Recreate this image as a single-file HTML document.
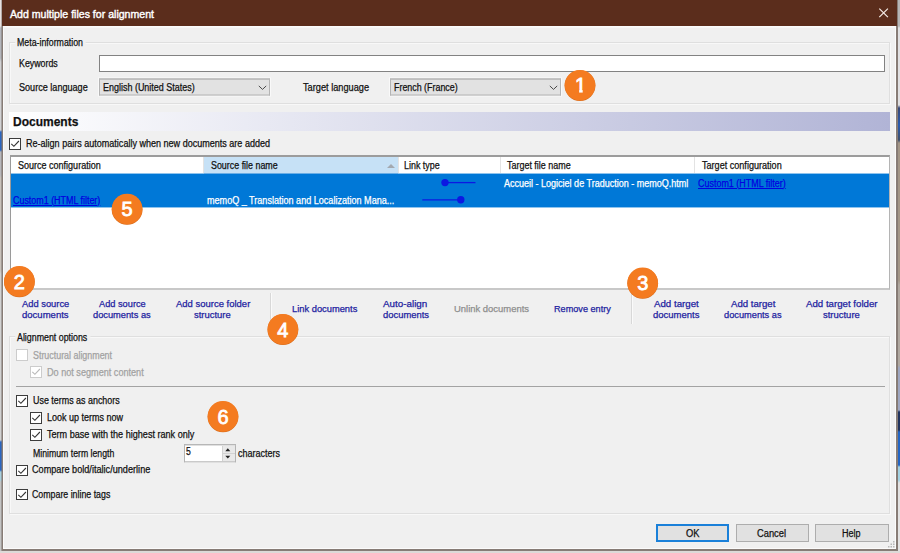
<!DOCTYPE html>
<html lang="en">
<head>
<meta charset="utf-8">
<title>Add multiple files for alignment</title>
<style>
html,body{margin:0;padding:0;}
body{width:900px;height:553px;overflow:hidden;position:relative;background:#d9d9d9;font-family:"Liberation Sans",sans-serif;font-size:10px;color:#111;}
.abs,.t,.cb,.btn,.circ,.grp,.inp,.combo{position:absolute;box-sizing:border-box;}
.t{white-space:nowrap;line-height:12px;transform-origin:0 50%;-webkit-text-stroke:0.25px;}
.grp{border:1px solid #dfdfdf;box-shadow:1px 1px 0 #f8f8f8,inset 1px 1px 0 #f8f8f8;}
.inp{background:#fff;border:1px solid #828282;}
.combo{background:#e2e2e2;border:1px solid #b4b4b4;border-top-color:#9c9c9c;box-shadow:0 0 0 1px #f9f9f9;transform:translateY(-0.5px);}
.circ{width:31px;height:31px;border-radius:50%;background:#f47b20;color:#fff;font-size:20px;text-align:center;line-height:31px;-webkit-text-stroke:0.8px #fff;box-shadow:inset 0 -1px 1px rgba(170,70,0,.45),0 0 1px rgba(200,100,30,.6);}
.cb{width:11.5px;height:11.5px;border:1px solid #3c3c3c;background:#fff;}
.cb.dis{border-color:#cccccc;}
.cb svg{position:absolute;left:-1px;top:-1px;}
.btn{height:18px;background:#e1e1e1;border:1px solid #adadad;}
</style>
</head>
<body>

<div class="abs" style="left:0;top:0;width:2px;height:553px;background:linear-gradient(to bottom,#e8e1e1 0,#e8e1e1 26px,#b4b6bc 28px,#b4b6bc 58px,#d2d2d4 62px,#d2d2d4 130px,#2a66c2 132px,#2a66c2 150px,#b8b8bc 152px,#b8b8bc 175px,#c9c2bb 178px,#c9c2bb 270px,#d2d2d2 274px,#d2d2d2 440px,#2a66c2 442px,#2a66c2 470px,#a8d0de 472px,#a8d0de 480px,#c4c4c4 482px,#c4c4c4 553px);"></div>
<div class="abs" style="left:898px;top:0;width:2px;height:553px;background:linear-gradient(to bottom,#b6b6b6 0,#b6b6b6 26px,#e0e0e2 28px,#e0e0e2 105px,#3a4a78 108px,#2a5cb0 125px,#40506c 140px,#a39687 143px,#a39687 280px,#b0a8a0 285px,#b0a8a0 365px,#9ea6c0 368px,#9ea6c0 410px,#22345e 412px,#22345e 430px,#2466c4 432px,#2466c4 465px,#a4d2e2 467px,#a4d2e2 480px,#e2e2e2 483px,#e2e2e2 553px);"></div>
<div class="abs" style="left:0;top:551px;width:900px;height:2px;background:#dddad8;"></div>
<div class="abs" style="left:1px;top:0;width:1px;height:551px;background:rgba(124,116,112,.5);"></div>
<div class="abs" style="left:2px;top:0;width:896px;height:551px;background:#877c76;"></div>
<div class="abs" style="left:3px;top:0;width:893px;height:549px;background:#fbfbfb;"></div>
<div class="abs" style="left:4px;top:0;width:891px;height:548px;background:#f0f0f0;"></div>
<div class="abs" style="left:2px;top:0;width:895px;height:26px;background:#5b2d1c;"></div>
<div class="abs" style="left:3px;top:26px;width:893px;height:2px;background:linear-gradient(to bottom,#fcfcfc,#f5f5f5);"></div>
<svg class="abs" style="left:878px;top:7px" width="11" height="11" viewBox="0 0 11 11"><path d="M1.3 1.6 L9.9 10.2 M9.9 1.6 L1.3 10.2" stroke="#f5ebe6" stroke-width="1.2" fill="none"/></svg>
<div class="grp" style="left:9px;top:42px;width:881px;height:62px;"></div>
<div class="inp" style="left:99px;top:55px;width:786px;height:17px;"></div>
<div class="combo" style="left:99px;top:79px;width:171px;height:17px;"></div>
<svg class="abs" style="left:258px;top:85px" width="9" height="6" viewBox="0 0 9 6"><path d="M0.8 0.9 L4.5 4.4 L8.2 0.9" stroke="#4a4a4a" stroke-width="1" fill="none"/></svg>
<div class="combo" style="left:390px;top:79px;width:171px;height:17px;"></div>
<svg class="abs" style="left:549px;top:85px" width="9" height="6" viewBox="0 0 9 6"><path d="M0.8 0.9 L4.5 4.4 L8.2 0.9" stroke="#4a4a4a" stroke-width="1" fill="none"/></svg>
<div class="abs" style="left:9px;top:112px;width:881px;height:19px;background:linear-gradient(to right,#ffffff 0%,#b1b4d6 100%);"></div>
<div class="abs" style="left:10px;top:155px;width:880px;height:135px;background:#fff;border:1px solid #9a9a9a;border-top:2px solid #9c9c9c;border-bottom:2px solid #c8c8c8;border-right-color:#b4b4b4;"></div>
<div class="abs" style="left:204px;top:157px;width:194px;height:17px;background:#c6e1f6;"></div>
<div class="abs" style="left:203px;top:157px;width:1px;height:17px;background:#e3e3e3;"></div>
<div class="abs" style="left:398px;top:157px;width:1px;height:17px;background:#e3e3e3;"></div>
<div class="abs" style="left:500px;top:157px;width:1px;height:17px;background:#e3e3e3;"></div>
<div class="abs" style="left:694px;top:157px;width:1px;height:17px;background:#e3e3e3;"></div>
<svg class="abs" style="left:387px;top:164px" width="8" height="4" viewBox="0 0 8 4"><path d="M0 4 L4 0 L8 4 Z" fill="#a3a9b0"/></svg>
<div class="abs" style="left:11px;top:173px;width:878px;height:35px;background:linear-gradient(to bottom,#8fc4ee 0,#8fc4ee 1px,#0078d7 1px,#0078d7 34px,#8fc4ee 34px);"></div>
<div class="abs" style="left:204px;top:173px;width:194px;height:1px;background:#6aaee6;"></div>
<svg class="abs" style="left:415px;top:176px" width="70" height="30" viewBox="0 0 70 30">
<path d="M30 6.6 H60.5" stroke="#0c18e2" stroke-width="1.3"/><circle cx="30" cy="6.6" r="3.7" fill="#0c18e2"/>
<path d="M7.3 23.8 H46" stroke="#0c18e2" stroke-width="1.3"/><circle cx="45.8" cy="23.8" r="3.7" fill="#0c18e2"/>
</svg>
<div class="abs" style="left:270px;top:293px;width:2px;height:31px;background:linear-gradient(to right,#d8d8d8 50%,#fafafa 50%);"></div>
<div class="abs" style="left:631px;top:293px;width:2px;height:31px;background:linear-gradient(to right,#d8d8d8 50%,#fafafa 50%);"></div>
<div class="grp" style="left:9px;top:336px;width:881px;height:178px;"></div>
<div class="abs" style="left:16px;top:386px;width:869px;height:1px;background:#a3a3a3;"></div>
<div class="cb" style="left:9.2px;top:138.2px;"><svg width="12" height="12" viewBox="0 0 12 12"><path d="M2.3 5.8 L4.9 8.3 L9.9 3.0" stroke="#333" stroke-width="1.1" fill="none"/></svg></div>
<div class="cb dis" style="left:16.3px;top:349.3px;"></div>
<div class="cb dis" style="left:30px;top:366.3px;"><svg width="12" height="12" viewBox="0 0 12 12"><path d="M2.3 5.8 L4.9 8.3 L9.9 3.0" stroke="#b9b9b9" stroke-width="1.1" fill="none"/></svg></div>
<div class="cb" style="left:16.1px;top:395.2px;"><svg width="12" height="12" viewBox="0 0 12 12"><path d="M2.3 5.8 L4.9 8.3 L9.9 3.0" stroke="#333" stroke-width="1.1" fill="none"/></svg></div>
<div class="cb" style="left:30px;top:412.4px;"><svg width="12" height="12" viewBox="0 0 12 12"><path d="M2.3 5.8 L4.9 8.3 L9.9 3.0" stroke="#333" stroke-width="1.1" fill="none"/></svg></div>
<div class="cb" style="left:30px;top:429.3px;"><svg width="12" height="12" viewBox="0 0 12 12"><path d="M2.3 5.8 L4.9 8.3 L9.9 3.0" stroke="#333" stroke-width="1.1" fill="none"/></svg></div>
<div class="cb" style="left:16.1px;top:464.6px;"><svg width="12" height="12" viewBox="0 0 12 12"><path d="M2.3 5.8 L4.9 8.3 L9.9 3.0" stroke="#333" stroke-width="1.1" fill="none"/></svg></div>
<div class="cb" style="left:16.1px;top:488.9px;"><svg width="12" height="12" viewBox="0 0 12 12"><path d="M2.3 5.8 L4.9 8.3 L9.9 3.0" stroke="#333" stroke-width="1.1" fill="none"/></svg></div>
<div class="inp" style="left:184px;top:444px;width:52px;height:18px;border-color:#b4b4b4;border-top-color:#9a9a9a;transform:translateY(0.3px);"></div>
<svg class="abs" style="left:222px;top:446px" width="13" height="15" viewBox="0 0 13 15"><rect width="13" height="15" fill="#e9e9e9"/><path d="M0.5 0 V15 M1 7.5 H13" stroke="#d2d2d2"/><path d="M3.3 5.2 L5.8 2.2 L8.3 5.2 Z M3.3 9.8 L5.8 12.6 L8.3 9.8 Z" fill="#222"/></svg>
<div class="btn" style="left:656px;top:524px;width:73px;border:2px solid #1a80d9;"></div>
<div class="btn" style="left:736px;top:524px;width:73px;"></div>
<div class="btn" style="left:815px;top:524px;width:74px;"></div>
<svg class="abs" style="left:888px;top:540px" width="8" height="8" viewBox="0 0 8 8"><g fill="#b8b8b8"><rect x="5" y="1" width="1.5" height="1.5"/><rect x="5" y="3.5" width="1.5" height="1.5"/><rect x="2.5" y="3.5" width="1.5" height="1.5"/><rect x="5" y="6" width="1.5" height="1.5"/><rect x="2.5" y="6" width="1.5" height="1.5"/><rect x="0" y="6" width="1.5" height="1.5"/></g></svg>
<div class="t" style="left:9.6px;top:8.0px;transform:scaleX(0.9613);font-size:11px;color:#fff;-webkit-text-stroke:0.4px;">Add multiple files for alignment</div>
<div class="t" style="left:17.3px;top:37.0px;transform:scaleX(0.8796);background:#f0f0f0;box-shadow:-2px 0 0 #f0f0f0,3px 0 0 #f0f0f0;">Meta-information</div>
<div class="t" style="left:19.0px;top:58.3px;transform:scaleX(0.8814);">Keywords</div>
<div class="t" style="left:19.0px;top:82.3px;transform:scaleX(0.9084);">Source language</div>
<div class="t" style="left:102.7px;top:82.0px;transform:scaleX(0.8965);">English (United States)</div>
<div class="t" style="left:303.3px;top:82.3px;transform:scaleX(0.9201);">Target language</div>
<div class="t" style="left:394.0px;top:82.0px;transform:scaleX(0.8886);">French (France)</div>
<div class="t" style="left:12.7px;top:114.0px;transform:scaleX(0.9224);font-size:13px;line-height:16px;font-weight:bold;">Documents</div>
<div class="t" style="left:26.0px;top:138.0px;transform:scaleX(0.9032);">Re-align pairs automatically when new documents are added</div>
<div class="t" style="left:18.3px;top:160.3px;transform:scaleX(0.9015);">Source configuration</div>
<div class="t" style="left:211.0px;top:160.3px;transform:scaleX(0.8888);">Source file name</div>
<div class="t" style="left:404.3px;top:160.3px;transform:scaleX(0.8918);">Link type</div>
<div class="t" style="left:507.3px;top:160.3px;transform:scaleX(0.8952);">Target file name</div>
<div class="t" style="left:702.3px;top:160.3px;transform:scaleX(0.9073);">Target configuration</div>
<div class="t" style="left:13.3px;top:194.8px;transform:scaleX(0.8910);color:#0202e0;text-decoration:underline;">Custom1 (HTML filter)</div>
<div class="t" style="left:207.0px;top:195.0px;transform:scaleX(0.9058);color:#fff;">memoQ _ Translation and Localization Mana...</div>
<div class="t" style="left:503.7px;top:177.8px;transform:scaleX(0.9011);color:#fff;">Accueil - Logiciel de Traduction - memoQ.html</div>
<div class="t" style="left:698.3px;top:177.6px;transform:scaleX(0.8950);color:#0202e0;text-decoration:underline;">Custom1 (HTML filter)</div>
<div class="t" style="left:21.6px;top:297.7px;transform:scaleX(1.0057);font-size:9.3px;color:#2222a0;">Add source</div>
<div class="t" style="left:21.7px;top:309.1px;transform:scaleX(1.0245);font-size:9.3px;color:#2222a0;">documents</div>
<div class="t" style="left:98.9px;top:297.7px;transform:scaleX(0.9930);font-size:9.3px;color:#2222a0;">Add source</div>
<div class="t" style="left:93.3px;top:309.1px;transform:scaleX(0.9967);font-size:9.3px;color:#2222a0;">documents as</div>
<div class="t" style="left:175.7px;top:297.7px;transform:scaleX(1.0196);font-size:9.3px;color:#2222a0;">Add source folder</div>
<div class="t" style="left:194.3px;top:309.1px;transform:scaleX(1.0146);font-size:9.3px;color:#2222a0;">structure</div>
<div class="t" style="left:292.1px;top:302.8px;transform:scaleX(1.0027);font-size:9.3px;color:#2222a0;">Link documents</div>
<div class="t" style="left:383.4px;top:297.7px;transform:scaleX(1.0579);font-size:9.3px;color:#2222a0;">Auto-align</div>
<div class="t" style="left:382.7px;top:309.1px;transform:scaleX(1.0113);font-size:9.3px;color:#2222a0;">documents</div>
<div class="t" style="left:454.0px;top:302.8px;transform:scaleX(1.0148);font-size:9.3px;color:#8e8e8e;">Unlink documents</div>
<div class="t" style="left:554.4px;top:302.8px;transform:scaleX(0.9814);font-size:9.3px;color:#2222a0;">Remove entry</div>
<div class="t" style="left:654.0px;top:297.7px;transform:scaleX(1.0441);font-size:9.3px;color:#2222a0;">Add target</div>
<div class="t" style="left:652.8px;top:309.1px;transform:scaleX(1.0201);font-size:9.3px;color:#2222a0;">documents</div>
<div class="t" style="left:730.8px;top:297.7px;transform:scaleX(1.0348);font-size:9.3px;color:#2222a0;">Add target</div>
<div class="t" style="left:724.4px;top:309.1px;transform:scaleX(0.9950);font-size:9.3px;color:#2222a0;">documents as</div>
<div class="t" style="left:806.4px;top:297.7px;transform:scaleX(1.0415);font-size:9.3px;color:#2222a0;">Add target folder</div>
<div class="t" style="left:823.2px;top:309.1px;transform:scaleX(1.0174);font-size:9.3px;color:#2222a0;">structure</div>
<div class="t" style="left:17.3px;top:331.5px;transform:scaleX(0.8843);background:#f0f0f0;box-shadow:-2px 0 0 #f0f0f0,3px 0 0 #f0f0f0;">Alignment options</div>
<div class="t" style="left:32.7px;top:350.3px;transform:scaleX(0.8883);color:#a2a2a2;">Structural alignment</div>
<div class="t" style="left:46.7px;top:367.0px;transform:scaleX(0.9107);color:#a2a2a2;">Do not segment content</div>
<div class="t" style="left:32.7px;top:395.3px;transform:scaleX(0.8914);">Use terms as anchors</div>
<div class="t" style="left:46.7px;top:412.3px;transform:scaleX(0.8994);">Look up terms now</div>
<div class="t" style="left:46.7px;top:429.0px;transform:scaleX(0.9075);">Term base with the highest rank only</div>
<div class="t" style="left:32.7px;top:447.8px;transform:scaleX(0.8708);">Minimum term length</div>
<div class="t" style="left:185.8px;top:446.3px;transform:scaleX(0.8629);">5</div>
<div class="t" style="left:238.0px;top:447.8px;transform:scaleX(0.8996);">characters</div>
<div class="t" style="left:32.3px;top:464.0px;transform:scaleX(0.9133);">Compare bold/italic/underline</div>
<div class="t" style="left:32.3px;top:488.5px;transform:scaleX(0.8804);">Compare inline tags</div>
<div class="t" style="left:685.8px;top:528.3px;transform:scaleX(0.9341);">OK</div>
<div class="t" style="left:757.0px;top:528.3px;transform:scaleX(0.9313);">Cancel</div>
<div class="t" style="left:841.8px;top:528.3px;transform:scaleX(0.8990);">Help</div>
<svg class="abs" style="left:0;top:0" width="900" height="553" viewBox="0 0 900 553" font-family="Liberation Sans, sans-serif">
<circle cx="580" cy="85.60000000000001" r="15.4" fill="#d86c1c"/><circle cx="580" cy="85.2" r="15.3" fill="#f47b20"/><text x="580.6" y="92.4" text-anchor="middle" font-size="20" fill="#fff" stroke="#fff" stroke-width="0.8">1</text><rect x="574.4" y="89.5" width="4.7" height="4" fill="#f47b20"/><rect x="582.7" y="89.5" width="4.7" height="4" fill="#f47b20"/>
<circle cx="19.4" cy="281.79999999999995" r="15.4" fill="#d86c1c"/><circle cx="19.4" cy="281.4" r="15.3" fill="#f47b20"/><text x="19.4" y="288.6" text-anchor="middle" font-size="20" fill="#fff" stroke="#fff" stroke-width="0.8">2</text>
<circle cx="642.7" cy="283.29999999999995" r="15.4" fill="#d86c1c"/><circle cx="642.7" cy="282.9" r="15.3" fill="#f47b20"/><text x="642.7" y="290.1" text-anchor="middle" font-size="20" fill="#fff" stroke="#fff" stroke-width="0.8">3</text>
<circle cx="282.9" cy="329.7" r="15.4" fill="#d86c1c"/><circle cx="282.9" cy="329.3" r="15.3" fill="#f47b20"/><text x="282.9" y="336.5" text-anchor="middle" font-size="20" fill="#fff" stroke="#fff" stroke-width="0.8">4</text>
<circle cx="127.1" cy="209.4" r="15.4" fill="#d86c1c"/><circle cx="127.1" cy="209" r="15.3" fill="#f47b20"/><text x="127.1" y="216.2" text-anchor="middle" font-size="20" fill="#fff" stroke="#fff" stroke-width="0.8">5</text>
<circle cx="223" cy="416.79999999999995" r="15.4" fill="#d86c1c"/><circle cx="223" cy="416.4" r="15.3" fill="#f47b20"/><text x="223" y="423.6" text-anchor="middle" font-size="20" fill="#fff" stroke="#fff" stroke-width="0.8">6</text>
</svg>
</body>
</html>
